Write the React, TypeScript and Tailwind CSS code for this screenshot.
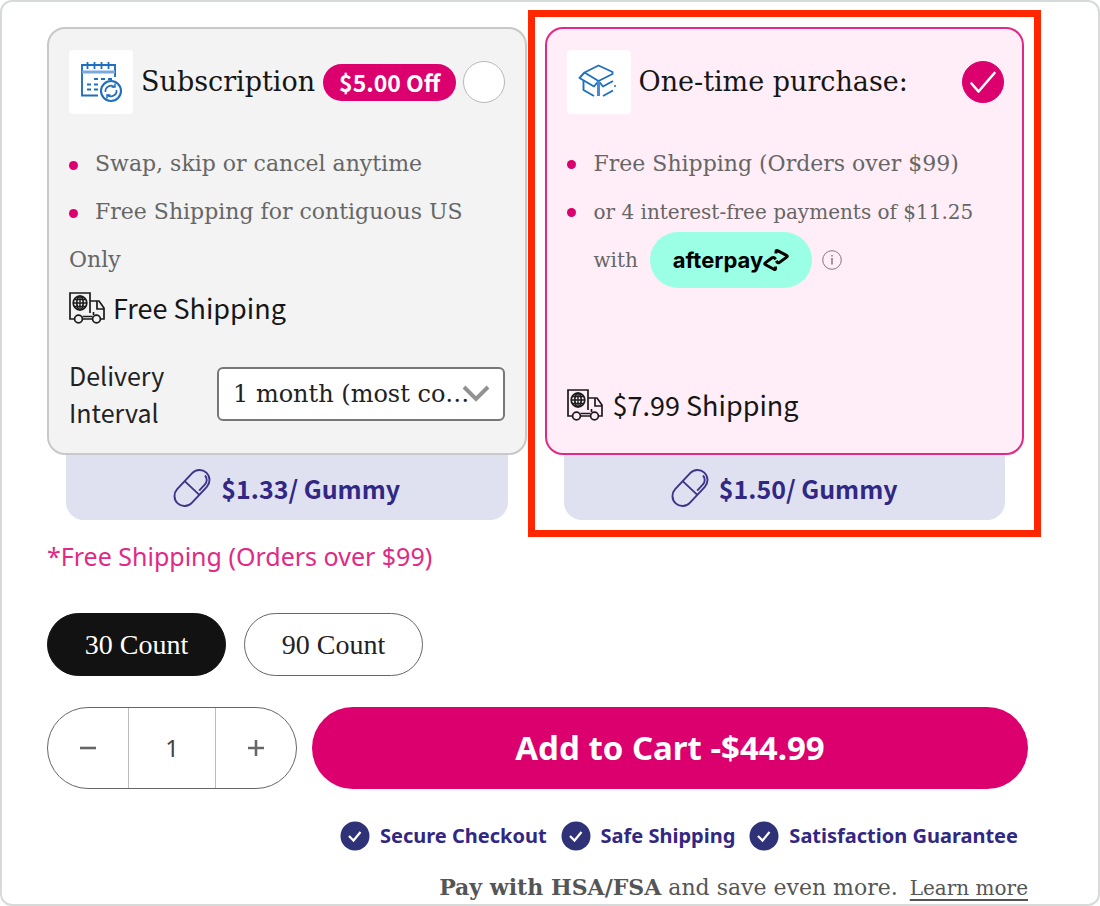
import { useState } from "react";
import type { ReactNode } from "react";

const SLAB = "font-['DejaVu_Serif',serif]";
const SANS = "font-['Noto_Sans_CJK_JP',sans-serif]";
const ROUND = "font-['Noto_Sans',sans-serif]";

function CalendarIcon() {
  return (
    <svg viewBox="0 0 64 64" className="h-16 w-16" fill="none" stroke="#1f6fc0" strokeWidth="1.9" aria-hidden="true">
      <path d="M29 45.500H13V15h33v12" />
      <path d="M13 22h33" stroke="#7aaadc" strokeWidth="3" />
      <path d="M18.500 12v7M25.500 12v7M32.500 12v7M39.500 12v7" strokeWidth="1.800" />
      <path d="M25 29h4M32 29h4M39 29h4M18 34.500h4M25 34.500h4M18 39.500h4M25 39.500h4" strokeWidth="1.900" />
      <circle cx="42" cy="41" r="10" fill="#fff" strokeWidth="2.100" />
      <path d="M36.500 42a5.500 5.500 0 0 1 9-5M47.500 40a5.500 5.500 0 0 1-9 5" strokeWidth="1.700" />
      <path d="M46 33.500V37h-3.500M38 48.500V45h3.500" strokeWidth="1.500" />
    </svg>
  );
}

function BoxIcon() {
  return (
    <svg viewBox="0 0 64 64" className="h-16 w-16" fill="none" stroke="#1f6fc0" strokeWidth="1.9" strokeLinejoin="round" aria-hidden="true">
      <path d="M17.500 22.500L31.500 15.500l14 6.500v2L31.500 31z" />
      <path d="M17.500 22.500l-5 5.500L27 36.500l4.500-5.500 4.500 5.500 10-5.500" />
      <path d="M16.500 30.500v9.500L27 46M36 46l10-5.500" />
      <path d="M31.500 31v15" strokeWidth="3" stroke="#4a8bce" />
      <circle cx="48" cy="36" r="1" fill="#1f6fc0" stroke="none" />
    </svg>
  );
}

function TruckIcon() {
  return (
    <svg viewBox="0 0 36 32" className="h-8 w-9 shrink-0" fill="none" stroke="#1b1b1b" strokeWidth="1.7" aria-hidden="true">
      <path d="M5.500 27H1V1h20v20M13.500 27h10M13.500 24.500h10M31.500 27H35V16l-5-7h-9M28 9v8h7M24.500 20v3" />
      <circle cx="11" cy="11" r="6.800" />
      <ellipse cx="11" cy="11" rx="3.200" ry="6.800" />
      <path d="M4.500 11h13M5.500 7.500h11M5.500 14.500h11M11 4v14" strokeWidth="1.400" />
      <circle cx="9.500" cy="27" r="3.900" />
      <circle cx="27.500" cy="27" r="3.900" />
    </svg>
  );
}

function PillIcon() {
  return (
    <svg viewBox="0 0 38 38" className="h-[38px] w-[38px] shrink-0" fill="none" stroke="#3d3589" strokeWidth="1.9" aria-hidden="true">
      <g transform="rotate(-47 19 19)">
        <rect x="-2" y="9" width="42" height="20" rx="10" />
        <path d="M19 9v20M22 26h8.500a6.500 6.500 0 0 0 6.500-6" />
      </g>
    </svg>
  );
}

function Afterpay() {
  return (
    <span className="inline-flex h-14 w-[162px] items-center justify-center rounded-full bg-[#9affe4] text-black">
      <span className="font-['Inter',sans-serif] text-[22px] leading-6 font-bold">afterpay</span>
      <svg viewBox="0 0 26 24" className="h-6 w-[26px]" fill="none" stroke="currentColor" strokeWidth="3" strokeLinejoin="round" aria-hidden="true">
        <path d="M13 5.500V3.500q0-1.500 1.500-.8l9 4.600q1.500.8.200 1.800l-7.200 5.300q-1.500.8-2.300-.2l-1-1.400" />
        <path d="M12.500 18.500v2q0 1.500-1.500.8l-8.500-4.600q-1.500-.8-.2-1.800L9 9.800q1.500-.8 2.500.1l1.300 1.400" />
      </svg>
    </span>
  );
}

function Choice({ id, checked, onChange }: { id: string; checked: boolean; onChange: () => void }) {
  return (
    <span className="relative ml-auto h-[42px] w-[42px] shrink-0">
      <input
        id={id}
        type="radio"
        name="plan"
        checked={checked}
        onChange={onChange}
        className="block h-full w-full appearance-none rounded-full border border-[#b9b9b9] bg-white checked:border-[#db006e] checked:bg-[#db006e]"
      />
      {checked && (
        <svg viewBox="0 0 42 42" className="pointer-events-none absolute inset-0" fill="none" stroke="#fff" strokeWidth="2.600" strokeLinecap="round" strokeLinejoin="round" aria-hidden="true">
          <path d="M9.500 22.500l7 8 16-18.500" />
        </svg>
      )}
    </span>
  );
}

function UnitPrice({ children }: { children: ReactNode }) {
  return (
    <div className={`${SANS} mx-[19px] flex h-[65px] items-center justify-center gap-2.5 rounded-b-[18px] bg-[#dfe0f0] text-[25px] leading-9 font-bold text-[#322783]`}>
      <PillIcon />
      {children}
    </div>
  );
}

function Badge({ children }: { children: ReactNode }) {
  return (
    <li className="flex items-center gap-2.5">
      <svg viewBox="0 0 30 30" className="h-[30px] w-[30px] shrink-0" fill="none" aria-hidden="true">
        <circle cx="15" cy="15" r="14.500" fill="#2f3277" />
        <path d="M9 15l4.500 4.500 7-8.500" stroke="#fff" strokeWidth="2.200" />
      </svg>
      {children}
    </li>
  );
}

const dot = "h-[9px] w-[9px] rounded-full bg-[#db006e]";

export default function App() {
  const [plan, setPlan] = useState("once");
  const [count, setCount] = useState(30);
  const [quantity, setQuantity] = useState(1);

  return (
    <main className="min-h-screen rounded-xl border-2 border-[#d6dbd9] bg-white pt-[25px] pr-[70px] pl-[45px]">
      <div className="grid grid-cols-2 gap-[18px] pr-1">
        <section className="flex flex-col">
          <div className="flex grow flex-col rounded-[18px] border-2 border-[#c8c8c8] bg-[#f3f3f3] px-5 pt-[21px] pb-5">
            <div className="flex items-center">
              <span className="shrink-0 rounded bg-white">
                <CalendarIcon />
              </span>
              <label htmlFor="subscription" className={`${SLAB} ml-2 text-[27px] text-[#161616]`}>
                Subscription
              </label>
              <span className={`${SANS} mr-1 ml-2 rounded-full bg-[#db006e] px-4 text-[23px] leading-[37px] font-bold whitespace-nowrap text-white`}>
                $5.00 Off
              </span>
              <Choice id="subscription" checked={plan === "subscription"} onChange={() => setPlan("subscription")} />
            </div>
            <ul className={`${SLAB} mt-[26px] text-[22px] leading-[48px] text-[#666]`}>
              <li>
                <span className={`${dot} mr-[17px] inline-block align-middle`} />
                Swap, skip or cancel anytime
              </li>
              <li>
                <span className={`${dot} mr-[17px] inline-block align-middle`} />
                Free Shipping for contiguous US Only
              </li>
            </ul>
            <p className={`${SANS} mt-1.5 flex items-center gap-2 text-[27px] leading-9 text-[#161616]`}>
              <TruckIcon />
              Free Shipping
            </p>
            <div className="mt-[31px] mb-0.5 flex items-center gap-[46px]">
              <label htmlFor="interval" className={`${SANS} w-[102px] shrink-0 text-[25px] leading-[37px] text-[#222]`}>
                Delivery Interval
              </label>
              <div className="relative min-w-0 grow">
                <select
                  id="interval"
                  className={`${SLAB} block h-[54px] w-full appearance-none rounded-md border-2 border-[#777] bg-white pr-6 pl-3.5 text-2xl text-ellipsis text-[#222]`}
                >
                  <option>1 month (most common)</option>
                  <option>2 months</option>
                  <option>3 months</option>
                </select>
                <svg viewBox="0 0 28 18" className="pointer-events-none absolute top-[18px] right-[15px] h-[18px] w-7" fill="none" stroke="#929292" strokeWidth="4" aria-hidden="true">
                  <path d="M2 2l12 12L26 2" />
                </svg>
              </div>
            </div>
          </div>
          <UnitPrice>$1.33/ Gummy</UnitPrice>
        </section>

        <section className="flex flex-col outline-[7px] outline-offset-[10px] outline-[#ff2600]">
          <div className="flex grow flex-col rounded-[18px] border-2 border-[#e02a86] bg-[#ffeef7] pt-[21px] pr-[18px] pb-[30px] pl-5">
            <div className="flex items-center">
              <span className="shrink-0 rounded bg-white">
                <BoxIcon />
              </span>
              <label htmlFor="once" className={`${SLAB} ml-2 text-[27px] text-[#161616]`}>
                One-time purchase:
              </label>
              <Choice id="once" checked={plan === "once"} onChange={() => setPlan("once")} />
            </div>
            <ul className={`${SLAB} mt-[26px] text-[#666]`}>
              <li className="flex text-[22px] leading-[48px]">
                <span className={`${dot} mt-5 mr-[18px] shrink-0`} />
                Free Shipping (Orders over $99)
              </li>
              <li className="flex text-xl leading-[48px]">
                <span className={`${dot} mt-5 mr-[18px] shrink-0`} />
                <span>
                  or 4 interest-free payments of $11.25
                  <span className="-mt-1 flex items-center">
                    with
                    <span className="mr-2.5 ml-3 flex">
                      <Afterpay />
                    </span>
                    <button type="button" aria-label="About Afterpay">
                      <svg viewBox="0 0 20 20" className="block h-5 w-5" fill="none" stroke="#85747f" aria-hidden="true">
                        <circle cx="10" cy="10" r="9.300" />
                        <path d="M10 8v6.500M10 5v1.500" strokeWidth="1.500" />
                      </svg>
                    </button>
                  </span>
                </span>
              </li>
            </ul>
            <p className={`${SANS} mt-auto flex items-center gap-2.5 text-[27px] leading-9 text-[#161616]`}>
              <TruckIcon />
              $7.99 Shipping
            </p>
          </div>
          <UnitPrice>$1.50/ Gummy</UnitPrice>
        </section>
      </div>

      <p className={`${ROUND} mt-[18px] text-[25px] leading-9 text-[#e02a86]`}>*Free Shipping (Orders over $99)</p>

      <div className="mt-[39px] flex gap-[18px]">
        {[30, 90].map((n) => (
          <button
            key={n}
            type="button"
            aria-pressed={count === n}
            onClick={() => setCount(n)}
            className={`h-[63px] w-[179px] rounded-full border font-['Liberation_Serif',serif] text-[28px] leading-8 ${
              count === n ? "border-[#121212] bg-[#121212] text-white" : "border-[#666] bg-white text-[#222]"
            }`}
          >
            {n} Count
          </button>
        ))}
      </div>

      <div className="mt-[31px] flex items-center gap-[15px]">
        <div className={`${ROUND} flex h-[82px] w-[250px] shrink-0 rounded-full border border-[#666] text-[#444]`}>
          <button type="button" aria-label="Decrease quantity" onClick={() => setQuantity(Math.max(1, quantity - 1))} className="flex flex-1 items-center justify-center">
            <svg viewBox="0 0 18 18" className="h-[18px] w-[18px]" stroke="#666" strokeWidth="2.600" aria-hidden="true">
              <path d="M1 9h16" />
            </svg>
          </button>
          <input
            aria-label="Quantity"
            value={quantity}
            onChange={(e) => setQuantity(Number(e.target.value) || 1)}
            className="w-[88px] border-x border-[#bbb] text-center text-2xl"
          />
          <button type="button" aria-label="Increase quantity" onClick={() => setQuantity(quantity + 1)} className="flex flex-1 items-center justify-center">
            <svg viewBox="0 0 18 18" className="h-[18px] w-[18px]" stroke="#666" strokeWidth="2.600" aria-hidden="true">
              <path d="M1 9h16M9 1v16" />
            </svg>
          </button>
        </div>
        <button type="button" className={`${ROUND} h-[82px] grow rounded-full bg-[#db006e] text-[33px] leading-10 font-bold text-white`}>
          Add to Cart -$44.99
        </button>
      </div>

      <ul className={`${ROUND} mt-8 flex justify-end gap-3.5 pr-2.5 text-xl leading-[30px] font-bold whitespace-nowrap text-[#322783]`}>
        <Badge>Secure Checkout</Badge>
        <Badge>Safe Shipping</Badge>
        <Badge>Satisfaction Guarantee</Badge>
      </ul>
      <p className={`${SLAB} mt-5 flex items-baseline justify-end gap-3 text-[22px] leading-8 whitespace-nowrap text-[#555]`}>
        <span>
          <b>Pay with HSA/FSA</b> and save even more.
        </span>
        <a href="#hsa" className="text-xl underline underline-offset-4">
          Learn more
        </a>
      </p>
    </main>
  );
}
